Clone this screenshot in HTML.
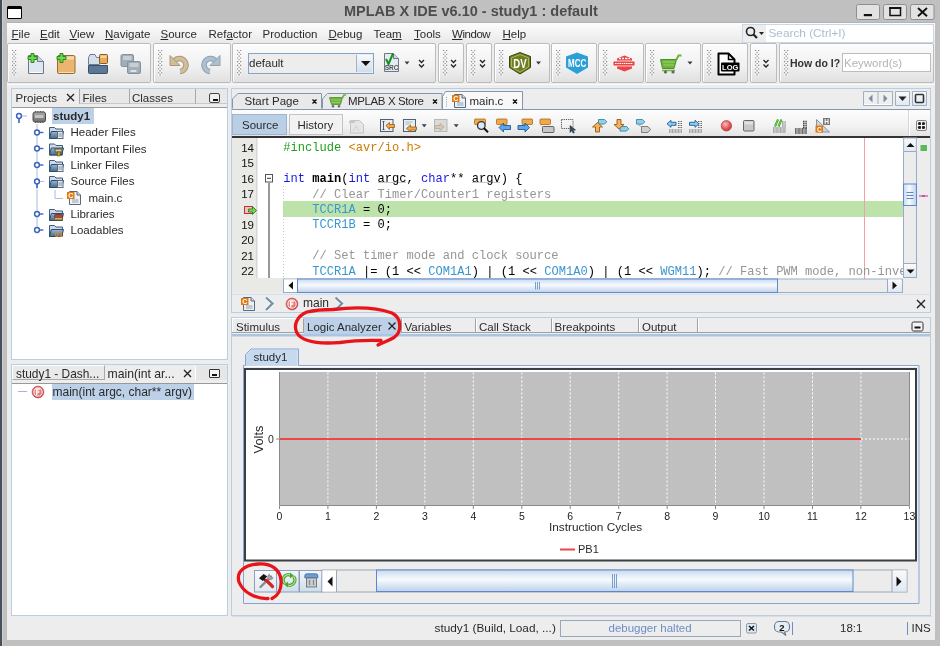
<!DOCTYPE html>
<html><head><meta charset="utf-8">
<style>
*{box-sizing:border-box;margin:0;padding:0}
html,body{width:940px;height:646px;overflow:hidden;background:#c0c0c0}
body{will-change:transform}
body{position:relative;font-family:"Liberation Sans",sans-serif;font-size:11.5px;color:#222}
.a{position:absolute}
.t{position:absolute;white-space:nowrap;line-height:14px;color:#2a2a2a}
.tb{position:absolute;top:43px;height:40px;border:1px solid #bcbcbc;box-shadow:inset 1px 1px 0 #fff;background:linear-gradient(#fcfcfc,#f0f0f0 60%,#e0e0e0);border-radius:2px}
.grip{position:absolute;top:6px;width:6px;height:27px;background-image:radial-gradient(circle at 1px 1px,#8e8e8e 0.8px,transparent 1px);background-size:2.5px 2.5px}
.u{text-decoration:underline;text-underline-offset:0.5px;text-decoration-thickness:1px}
.code{position:absolute;left:283.2px;white-space:pre;font-family:"Liberation Mono",monospace;font-size:12.08px;line-height:15px;color:#000}
.ln{position:absolute;left:232px;width:22px;text-align:right;font-size:11.5px;line-height:15px;color:#111}
.kw{color:#1818ea}.pp{color:#22a022}.st{color:#ce7b00}.cm{color:#959595}.mc{color:#3a96d0}.b{font-weight:bold}
.gx{position:absolute;top:372px;width:1px;height:133px;background-image:linear-gradient(#fff 50%,transparent 50%);background-size:1px 4px}
.tk{position:absolute;top:510px;width:20px;text-align:center;font-size:10.5px;color:#222}
</style></head><body>
<svg width="0" height="0" style="position:absolute">
<defs>
<linearGradient id="gBtn" x1="0" y1="0" x2="0" y2="1"><stop offset="0" stop-color="#fafafa"/><stop offset="1" stop-color="#dfe8f2"/></linearGradient>
<linearGradient id="gBtn2" x1="0" y1="0" x2="0" y2="1"><stop offset="0" stop-color="#f4f7fb"/><stop offset="1" stop-color="#cfdcea"/></linearGradient>
<radialGradient id="gRed2" cx="0.45" cy="0.4" r="0.7"><stop offset="0" stop-color="#f6a0a0"/><stop offset="0.7" stop-color="#e06060"/><stop offset="1" stop-color="#c03a3a"/></radialGradient>
<linearGradient id="gFold" x1="0" y1="0" x2="0" y2="1"><stop offset="0" stop-color="#9ab8d6"/><stop offset="1" stop-color="#46698e"/></linearGradient>
<linearGradient id="gChip" x1="0" y1="0" x2="0" y2="1"><stop offset="0" stop-color="#a8a8a8"/><stop offset="1" stop-color="#6e6e6e"/></linearGradient>
<radialGradient id="gRed" cx="0.4" cy="0.35" r="0.7"><stop offset="0" stop-color="#fbb"/><stop offset="0.6" stop-color="#e25a5a"/><stop offset="1" stop-color="#b83232"/></radialGradient>
<linearGradient id="gThumb" x1="0" y1="0" x2="0" y2="1"><stop offset="0" stop-color="#c8daef"/><stop offset="0.45" stop-color="#f7fafd"/><stop offset="1" stop-color="#bcd2ea"/></linearGradient>
<linearGradient id="gThumbV" x1="0" y1="0" x2="1" y2="0"><stop offset="0" stop-color="#c8daef"/><stop offset="0.45" stop-color="#f7fafd"/><stop offset="1" stop-color="#bcd2ea"/></linearGradient>
<pattern id="pGrip" width="4" height="4" patternUnits="userSpaceOnUse"><rect x="0" y="0" width="1" height="1" fill="#8a8a8a"/><rect x="2" y="2" width="1" height="1" fill="#8a8a8a"/><rect x="1" y="1" width="1" height="1" fill="#fff"/><rect x="3" y="3" width="1" height="1" fill="#fff"/></pattern>
<g id="folder"><path d="M0.5 2.5h5l1.5 1.5h6.5v9.5h-13z" fill="#cddbe8" stroke="#3e5b7c"/><path d="M0.5 13.5L2.3 6.5h12.2l-1.8 7z" fill="url(#gFold)" stroke="#2f4c6c"/></g>
<g id="hnd"><circle cx="3" cy="3" r="2.4" fill="#fff" stroke="#3c63bf" stroke-width="1.5"/><path d="M5.4 3h4" stroke="#3c63bf" stroke-width="1.4"/></g>
<g id="cfile"><path d="M2.5 1.5h7.5l3.5 3.5v9.5h-11z" fill="#eef2f6" stroke="#56687a"/><path d="M10 1.5v3.5h3.5" fill="#d6dee6" stroke="#56687a"/><path d="M5 10h6.5M5 12h6.5" stroke="#8aa0b8"/><rect x="0" y="2" width="7.5" height="7" fill="#e07b10"/><text x="3.75" y="8" font-family="Liberation Sans" font-weight="bold" font-size="7" fill="#fff" text-anchor="middle">C</text></g>
<g id="fbadge"><circle cx="6" cy="6" r="5.9" fill="url(#gRed2)" stroke="#b04545" stroke-width="0.7"/><circle cx="6" cy="6" r="4.1" fill="none" stroke="#fff" stroke-width="0.9"/><path d="M4.7 9.2V3.2h3.2M4.7 6h2.6" stroke="#fff" stroke-width="1.3" fill="none"/></g>
<g id="chev"><path d="M1.5 1L8 7l-6.5 6.5" fill="none" stroke="#f4f7fa" stroke-width="4"/><path d="M1.5 1L8 7l-6.5 6.5" fill="none" stroke="#7890a8" stroke-width="2.3"/></g>
<g id="mini"><rect x="0.5" y="0.5" width="11" height="9" rx="1.5" fill="#f4f4f4" stroke="#333"/><rect x="3" y="5" width="6" height="2" fill="#111"/></g>
</defs></svg>
<!-- window frame -->
<div class="a" style="left:0;top:0;width:2px;height:646px;background:#45505c"></div>
<div class="a" style="left:2px;top:0;width:1px;height:646px;background:#d0d0d0"></div>
<!-- title -->
<div class="a" style="left:7px;top:5.5px;width:15px;height:13px;border:1.6px solid #000;border-top-width:3.5px;background:#fff;border-radius:1.5px"></div>
<div class="t" style="left:344px;top:3px;font-weight:bold;font-size:14.5px;line-height:17px;color:#4d4d4d">MPLAB X IDE v6.10 - study1 : default</div>
<svg class="a" style="left:850px;top:0" width="90" height="24">
<rect x="6.5" y="4.5" width="23" height="15" rx="2" fill="#e2e2e2" stroke="#8e8e8e"/><rect x="13.8" y="14" width="8.2" height="2.2" fill="#111"/>
<rect x="33.5" y="4.5" width="23" height="15" rx="2" fill="#e2e2e2" stroke="#8e8e8e"/><rect x="40" y="8" width="10.5" height="7.5" fill="none" stroke="#111" stroke-width="1.5"/><rect x="39.2" y="7" width="12" height="2" fill="#111"/>
<rect x="60.5" y="4.5" width="23.5" height="15" rx="2" fill="#e2e2e2" stroke="#8e8e8e"/><path d="M68 8l9 8.2M77 8l-9 8.2" stroke="#111" stroke-width="1.9"/>
</svg>
<!-- main window content bg -->
<div class="a" style="left:7px;top:23px;width:928px;height:617px;background:#ededed"></div>
<!-- menu bar -->
<div class="a" style="left:7px;top:22px;width:928px;height:1px;background:#b2b2b2"></div><div class="a" style="left:7px;top:23px;width:928px;height:20px;background:linear-gradient(#fdfdfd,#e9e9e9)"></div>
<div class="t" style="top:26.5px;left:11.5px"><span class="u">F</span>ile</div>
<div class="t" style="top:26.5px;left:40px"><span class="u">E</span>dit</div>
<div class="t" style="top:26.5px;left:69.5px"><span class="u">V</span>iew</div>
<div class="t" style="top:26.5px;left:105px"><span class="u">N</span>avigate</div>
<div class="t" style="top:26.5px;left:160.5px"><span class="u">S</span>ource</div>
<div class="t" style="top:26.5px;left:208.5px">Ref<span class="u">a</span>ctor</div>
<div class="t" style="top:26.5px;left:262.5px">Production</div>
<div class="t" style="top:26.5px;left:328.5px"><span class="u">D</span>ebug</div>
<div class="t" style="top:26.5px;left:373.5px">Tea<span class="u">m</span></div>
<div class="t" style="top:26.5px;left:414px"><span class="u">T</span>ools</div>
<div class="t" style="top:26.5px;left:452px;letter-spacing:-0.45px"><span class="u">W</span>indow</div>
<div class="t" style="top:26.5px;left:502.5px"><span class="u">H</span>elp</div>
<!-- search -->
<div class="a" style="left:742px;top:24px;width:192px;height:19px;border:1px solid #c9d8e8;background:#fff"></div>
<div class="a" style="left:743px;top:25px;width:23px;height:17px;background:#ededed"></div>
<svg class="a" style="left:745px;top:26px" width="20" height="14"><circle cx="5.5" cy="5.5" r="4" fill="none" stroke="#222" stroke-width="1.6"/><path d="M8.5 8.5L12 12" stroke="#222" stroke-width="2.2"/><path d="M14 6h5l-2.5 3z" fill="#222"/></svg>
<div class="t" style="left:768.5px;top:26px;color:#a9bdd6;font-size:11.8px">Search (Ctrl+I)</div>

<!-- TOOLBAR -->
<div class="tb" style="left:7px;width:144px"></div>
<div class="tb" style="left:153px;width:78px"></div>
<div class="tb" style="left:232px;width:204px"></div>
<div class="tb" style="left:438px;width:26px"></div>
<div class="tb" style="left:466px;width:26px"></div>
<div class="tb" style="left:494px;width:56px"></div>
<div class="tb" style="left:551px;width:46px"></div>
<div class="tb" style="left:598px;width:46px"></div>
<div class="tb" style="left:645px;width:56px"></div>
<div class="tb" style="left:702px;width:46px"></div>
<div class="tb" style="left:750px;width:27px"></div>
<div class="tb" style="left:779px;width:155px"></div>
<svg class="a" style="left:0;top:0" width="940" height="90">
<path d="M13.5 50.00h1.2v1.1h-1.2z M12.0 51.85h1.2v1.1h-1.2z M15.0 51.85h1.2v1.1h-1.2z M13.5 53.70h1.2v1.1h-1.2z M12.0 55.55h1.2v1.1h-1.2z M15.0 55.55h1.2v1.1h-1.2z M13.5 57.40h1.2v1.1h-1.2z M12.0 59.25h1.2v1.1h-1.2z M15.0 59.25h1.2v1.1h-1.2z M13.5 61.10h1.2v1.1h-1.2z M12.0 62.95h1.2v1.1h-1.2z M15.0 62.95h1.2v1.1h-1.2z M13.5 64.80h1.2v1.1h-1.2z M12.0 66.65h1.2v1.1h-1.2z M15.0 66.65h1.2v1.1h-1.2z M13.5 68.50h1.2v1.1h-1.2z M12.0 70.35h1.2v1.1h-1.2z M15.0 70.35h1.2v1.1h-1.2z M13.5 72.20h1.2v1.1h-1.2z M12.0 74.05h1.2v1.1h-1.2z M15.0 74.05h1.2v1.1h-1.2z" fill="#fff"/><path d="M12.0 50.00h1.2v1.1h-1.2z M15.0 50.00h1.2v1.1h-1.2z M13.5 51.85h1.2v1.1h-1.2z M12.0 53.70h1.2v1.1h-1.2z M15.0 53.70h1.2v1.1h-1.2z M13.5 55.55h1.2v1.1h-1.2z M12.0 57.40h1.2v1.1h-1.2z M15.0 57.40h1.2v1.1h-1.2z M13.5 59.25h1.2v1.1h-1.2z M12.0 61.10h1.2v1.1h-1.2z M15.0 61.10h1.2v1.1h-1.2z M13.5 62.95h1.2v1.1h-1.2z M12.0 64.80h1.2v1.1h-1.2z M15.0 64.80h1.2v1.1h-1.2z M13.5 66.65h1.2v1.1h-1.2z M12.0 68.50h1.2v1.1h-1.2z M15.0 68.50h1.2v1.1h-1.2z M13.5 70.35h1.2v1.1h-1.2z M12.0 72.20h1.2v1.1h-1.2z M15.0 72.20h1.2v1.1h-1.2z M13.5 74.05h1.2v1.1h-1.2z" fill="#8c8c8c"/>
<path d="M159.5 50.00h1.2v1.1h-1.2z M158.0 51.85h1.2v1.1h-1.2z M161.0 51.85h1.2v1.1h-1.2z M159.5 53.70h1.2v1.1h-1.2z M158.0 55.55h1.2v1.1h-1.2z M161.0 55.55h1.2v1.1h-1.2z M159.5 57.40h1.2v1.1h-1.2z M158.0 59.25h1.2v1.1h-1.2z M161.0 59.25h1.2v1.1h-1.2z M159.5 61.10h1.2v1.1h-1.2z M158.0 62.95h1.2v1.1h-1.2z M161.0 62.95h1.2v1.1h-1.2z M159.5 64.80h1.2v1.1h-1.2z M158.0 66.65h1.2v1.1h-1.2z M161.0 66.65h1.2v1.1h-1.2z M159.5 68.50h1.2v1.1h-1.2z M158.0 70.35h1.2v1.1h-1.2z M161.0 70.35h1.2v1.1h-1.2z M159.5 72.20h1.2v1.1h-1.2z M158.0 74.05h1.2v1.1h-1.2z M161.0 74.05h1.2v1.1h-1.2z" fill="#fff"/><path d="M158.0 50.00h1.2v1.1h-1.2z M161.0 50.00h1.2v1.1h-1.2z M159.5 51.85h1.2v1.1h-1.2z M158.0 53.70h1.2v1.1h-1.2z M161.0 53.70h1.2v1.1h-1.2z M159.5 55.55h1.2v1.1h-1.2z M158.0 57.40h1.2v1.1h-1.2z M161.0 57.40h1.2v1.1h-1.2z M159.5 59.25h1.2v1.1h-1.2z M158.0 61.10h1.2v1.1h-1.2z M161.0 61.10h1.2v1.1h-1.2z M159.5 62.95h1.2v1.1h-1.2z M158.0 64.80h1.2v1.1h-1.2z M161.0 64.80h1.2v1.1h-1.2z M159.5 66.65h1.2v1.1h-1.2z M158.0 68.50h1.2v1.1h-1.2z M161.0 68.50h1.2v1.1h-1.2z M159.5 70.35h1.2v1.1h-1.2z M158.0 72.20h1.2v1.1h-1.2z M161.0 72.20h1.2v1.1h-1.2z M159.5 74.05h1.2v1.1h-1.2z" fill="#8c8c8c"/>
<path d="M238.5 50.00h1.2v1.1h-1.2z M237.0 51.85h1.2v1.1h-1.2z M240.0 51.85h1.2v1.1h-1.2z M238.5 53.70h1.2v1.1h-1.2z M237.0 55.55h1.2v1.1h-1.2z M240.0 55.55h1.2v1.1h-1.2z M238.5 57.40h1.2v1.1h-1.2z M237.0 59.25h1.2v1.1h-1.2z M240.0 59.25h1.2v1.1h-1.2z M238.5 61.10h1.2v1.1h-1.2z M237.0 62.95h1.2v1.1h-1.2z M240.0 62.95h1.2v1.1h-1.2z M238.5 64.80h1.2v1.1h-1.2z M237.0 66.65h1.2v1.1h-1.2z M240.0 66.65h1.2v1.1h-1.2z M238.5 68.50h1.2v1.1h-1.2z M237.0 70.35h1.2v1.1h-1.2z M240.0 70.35h1.2v1.1h-1.2z M238.5 72.20h1.2v1.1h-1.2z M237.0 74.05h1.2v1.1h-1.2z M240.0 74.05h1.2v1.1h-1.2z" fill="#fff"/><path d="M237.0 50.00h1.2v1.1h-1.2z M240.0 50.00h1.2v1.1h-1.2z M238.5 51.85h1.2v1.1h-1.2z M237.0 53.70h1.2v1.1h-1.2z M240.0 53.70h1.2v1.1h-1.2z M238.5 55.55h1.2v1.1h-1.2z M237.0 57.40h1.2v1.1h-1.2z M240.0 57.40h1.2v1.1h-1.2z M238.5 59.25h1.2v1.1h-1.2z M237.0 61.10h1.2v1.1h-1.2z M240.0 61.10h1.2v1.1h-1.2z M238.5 62.95h1.2v1.1h-1.2z M237.0 64.80h1.2v1.1h-1.2z M240.0 64.80h1.2v1.1h-1.2z M238.5 66.65h1.2v1.1h-1.2z M237.0 68.50h1.2v1.1h-1.2z M240.0 68.50h1.2v1.1h-1.2z M238.5 70.35h1.2v1.1h-1.2z M237.0 72.20h1.2v1.1h-1.2z M240.0 72.20h1.2v1.1h-1.2z M238.5 74.05h1.2v1.1h-1.2z" fill="#8c8c8c"/>
<path d="M444.5 50.00h1.2v1.1h-1.2z M443.0 51.85h1.2v1.1h-1.2z M446.0 51.85h1.2v1.1h-1.2z M444.5 53.70h1.2v1.1h-1.2z M443.0 55.55h1.2v1.1h-1.2z M446.0 55.55h1.2v1.1h-1.2z M444.5 57.40h1.2v1.1h-1.2z M443.0 59.25h1.2v1.1h-1.2z M446.0 59.25h1.2v1.1h-1.2z M444.5 61.10h1.2v1.1h-1.2z M443.0 62.95h1.2v1.1h-1.2z M446.0 62.95h1.2v1.1h-1.2z M444.5 64.80h1.2v1.1h-1.2z M443.0 66.65h1.2v1.1h-1.2z M446.0 66.65h1.2v1.1h-1.2z M444.5 68.50h1.2v1.1h-1.2z M443.0 70.35h1.2v1.1h-1.2z M446.0 70.35h1.2v1.1h-1.2z M444.5 72.20h1.2v1.1h-1.2z M443.0 74.05h1.2v1.1h-1.2z M446.0 74.05h1.2v1.1h-1.2z" fill="#fff"/><path d="M443.0 50.00h1.2v1.1h-1.2z M446.0 50.00h1.2v1.1h-1.2z M444.5 51.85h1.2v1.1h-1.2z M443.0 53.70h1.2v1.1h-1.2z M446.0 53.70h1.2v1.1h-1.2z M444.5 55.55h1.2v1.1h-1.2z M443.0 57.40h1.2v1.1h-1.2z M446.0 57.40h1.2v1.1h-1.2z M444.5 59.25h1.2v1.1h-1.2z M443.0 61.10h1.2v1.1h-1.2z M446.0 61.10h1.2v1.1h-1.2z M444.5 62.95h1.2v1.1h-1.2z M443.0 64.80h1.2v1.1h-1.2z M446.0 64.80h1.2v1.1h-1.2z M444.5 66.65h1.2v1.1h-1.2z M443.0 68.50h1.2v1.1h-1.2z M446.0 68.50h1.2v1.1h-1.2z M444.5 70.35h1.2v1.1h-1.2z M443.0 72.20h1.2v1.1h-1.2z M446.0 72.20h1.2v1.1h-1.2z M444.5 74.05h1.2v1.1h-1.2z" fill="#8c8c8c"/>
<path d="M472.5 50.00h1.2v1.1h-1.2z M471.0 51.85h1.2v1.1h-1.2z M474.0 51.85h1.2v1.1h-1.2z M472.5 53.70h1.2v1.1h-1.2z M471.0 55.55h1.2v1.1h-1.2z M474.0 55.55h1.2v1.1h-1.2z M472.5 57.40h1.2v1.1h-1.2z M471.0 59.25h1.2v1.1h-1.2z M474.0 59.25h1.2v1.1h-1.2z M472.5 61.10h1.2v1.1h-1.2z M471.0 62.95h1.2v1.1h-1.2z M474.0 62.95h1.2v1.1h-1.2z M472.5 64.80h1.2v1.1h-1.2z M471.0 66.65h1.2v1.1h-1.2z M474.0 66.65h1.2v1.1h-1.2z M472.5 68.50h1.2v1.1h-1.2z M471.0 70.35h1.2v1.1h-1.2z M474.0 70.35h1.2v1.1h-1.2z M472.5 72.20h1.2v1.1h-1.2z M471.0 74.05h1.2v1.1h-1.2z M474.0 74.05h1.2v1.1h-1.2z" fill="#fff"/><path d="M471.0 50.00h1.2v1.1h-1.2z M474.0 50.00h1.2v1.1h-1.2z M472.5 51.85h1.2v1.1h-1.2z M471.0 53.70h1.2v1.1h-1.2z M474.0 53.70h1.2v1.1h-1.2z M472.5 55.55h1.2v1.1h-1.2z M471.0 57.40h1.2v1.1h-1.2z M474.0 57.40h1.2v1.1h-1.2z M472.5 59.25h1.2v1.1h-1.2z M471.0 61.10h1.2v1.1h-1.2z M474.0 61.10h1.2v1.1h-1.2z M472.5 62.95h1.2v1.1h-1.2z M471.0 64.80h1.2v1.1h-1.2z M474.0 64.80h1.2v1.1h-1.2z M472.5 66.65h1.2v1.1h-1.2z M471.0 68.50h1.2v1.1h-1.2z M474.0 68.50h1.2v1.1h-1.2z M472.5 70.35h1.2v1.1h-1.2z M471.0 72.20h1.2v1.1h-1.2z M474.0 72.20h1.2v1.1h-1.2z M472.5 74.05h1.2v1.1h-1.2z" fill="#8c8c8c"/>
<path d="M500.5 50.00h1.2v1.1h-1.2z M499.0 51.85h1.2v1.1h-1.2z M502.0 51.85h1.2v1.1h-1.2z M500.5 53.70h1.2v1.1h-1.2z M499.0 55.55h1.2v1.1h-1.2z M502.0 55.55h1.2v1.1h-1.2z M500.5 57.40h1.2v1.1h-1.2z M499.0 59.25h1.2v1.1h-1.2z M502.0 59.25h1.2v1.1h-1.2z M500.5 61.10h1.2v1.1h-1.2z M499.0 62.95h1.2v1.1h-1.2z M502.0 62.95h1.2v1.1h-1.2z M500.5 64.80h1.2v1.1h-1.2z M499.0 66.65h1.2v1.1h-1.2z M502.0 66.65h1.2v1.1h-1.2z M500.5 68.50h1.2v1.1h-1.2z M499.0 70.35h1.2v1.1h-1.2z M502.0 70.35h1.2v1.1h-1.2z M500.5 72.20h1.2v1.1h-1.2z M499.0 74.05h1.2v1.1h-1.2z M502.0 74.05h1.2v1.1h-1.2z" fill="#fff"/><path d="M499.0 50.00h1.2v1.1h-1.2z M502.0 50.00h1.2v1.1h-1.2z M500.5 51.85h1.2v1.1h-1.2z M499.0 53.70h1.2v1.1h-1.2z M502.0 53.70h1.2v1.1h-1.2z M500.5 55.55h1.2v1.1h-1.2z M499.0 57.40h1.2v1.1h-1.2z M502.0 57.40h1.2v1.1h-1.2z M500.5 59.25h1.2v1.1h-1.2z M499.0 61.10h1.2v1.1h-1.2z M502.0 61.10h1.2v1.1h-1.2z M500.5 62.95h1.2v1.1h-1.2z M499.0 64.80h1.2v1.1h-1.2z M502.0 64.80h1.2v1.1h-1.2z M500.5 66.65h1.2v1.1h-1.2z M499.0 68.50h1.2v1.1h-1.2z M502.0 68.50h1.2v1.1h-1.2z M500.5 70.35h1.2v1.1h-1.2z M499.0 72.20h1.2v1.1h-1.2z M502.0 72.20h1.2v1.1h-1.2z M500.5 74.05h1.2v1.1h-1.2z" fill="#8c8c8c"/>
<path d="M557.5 50.00h1.2v1.1h-1.2z M556.0 51.85h1.2v1.1h-1.2z M559.0 51.85h1.2v1.1h-1.2z M557.5 53.70h1.2v1.1h-1.2z M556.0 55.55h1.2v1.1h-1.2z M559.0 55.55h1.2v1.1h-1.2z M557.5 57.40h1.2v1.1h-1.2z M556.0 59.25h1.2v1.1h-1.2z M559.0 59.25h1.2v1.1h-1.2z M557.5 61.10h1.2v1.1h-1.2z M556.0 62.95h1.2v1.1h-1.2z M559.0 62.95h1.2v1.1h-1.2z M557.5 64.80h1.2v1.1h-1.2z M556.0 66.65h1.2v1.1h-1.2z M559.0 66.65h1.2v1.1h-1.2z M557.5 68.50h1.2v1.1h-1.2z M556.0 70.35h1.2v1.1h-1.2z M559.0 70.35h1.2v1.1h-1.2z M557.5 72.20h1.2v1.1h-1.2z M556.0 74.05h1.2v1.1h-1.2z M559.0 74.05h1.2v1.1h-1.2z" fill="#fff"/><path d="M556.0 50.00h1.2v1.1h-1.2z M559.0 50.00h1.2v1.1h-1.2z M557.5 51.85h1.2v1.1h-1.2z M556.0 53.70h1.2v1.1h-1.2z M559.0 53.70h1.2v1.1h-1.2z M557.5 55.55h1.2v1.1h-1.2z M556.0 57.40h1.2v1.1h-1.2z M559.0 57.40h1.2v1.1h-1.2z M557.5 59.25h1.2v1.1h-1.2z M556.0 61.10h1.2v1.1h-1.2z M559.0 61.10h1.2v1.1h-1.2z M557.5 62.95h1.2v1.1h-1.2z M556.0 64.80h1.2v1.1h-1.2z M559.0 64.80h1.2v1.1h-1.2z M557.5 66.65h1.2v1.1h-1.2z M556.0 68.50h1.2v1.1h-1.2z M559.0 68.50h1.2v1.1h-1.2z M557.5 70.35h1.2v1.1h-1.2z M556.0 72.20h1.2v1.1h-1.2z M559.0 72.20h1.2v1.1h-1.2z M557.5 74.05h1.2v1.1h-1.2z" fill="#8c8c8c"/>
<path d="M604.5 50.00h1.2v1.1h-1.2z M603.0 51.85h1.2v1.1h-1.2z M606.0 51.85h1.2v1.1h-1.2z M604.5 53.70h1.2v1.1h-1.2z M603.0 55.55h1.2v1.1h-1.2z M606.0 55.55h1.2v1.1h-1.2z M604.5 57.40h1.2v1.1h-1.2z M603.0 59.25h1.2v1.1h-1.2z M606.0 59.25h1.2v1.1h-1.2z M604.5 61.10h1.2v1.1h-1.2z M603.0 62.95h1.2v1.1h-1.2z M606.0 62.95h1.2v1.1h-1.2z M604.5 64.80h1.2v1.1h-1.2z M603.0 66.65h1.2v1.1h-1.2z M606.0 66.65h1.2v1.1h-1.2z M604.5 68.50h1.2v1.1h-1.2z M603.0 70.35h1.2v1.1h-1.2z M606.0 70.35h1.2v1.1h-1.2z M604.5 72.20h1.2v1.1h-1.2z M603.0 74.05h1.2v1.1h-1.2z M606.0 74.05h1.2v1.1h-1.2z" fill="#fff"/><path d="M603.0 50.00h1.2v1.1h-1.2z M606.0 50.00h1.2v1.1h-1.2z M604.5 51.85h1.2v1.1h-1.2z M603.0 53.70h1.2v1.1h-1.2z M606.0 53.70h1.2v1.1h-1.2z M604.5 55.55h1.2v1.1h-1.2z M603.0 57.40h1.2v1.1h-1.2z M606.0 57.40h1.2v1.1h-1.2z M604.5 59.25h1.2v1.1h-1.2z M603.0 61.10h1.2v1.1h-1.2z M606.0 61.10h1.2v1.1h-1.2z M604.5 62.95h1.2v1.1h-1.2z M603.0 64.80h1.2v1.1h-1.2z M606.0 64.80h1.2v1.1h-1.2z M604.5 66.65h1.2v1.1h-1.2z M603.0 68.50h1.2v1.1h-1.2z M606.0 68.50h1.2v1.1h-1.2z M604.5 70.35h1.2v1.1h-1.2z M603.0 72.20h1.2v1.1h-1.2z M606.0 72.20h1.2v1.1h-1.2z M604.5 74.05h1.2v1.1h-1.2z" fill="#8c8c8c"/>
<path d="M651.5 50.00h1.2v1.1h-1.2z M650.0 51.85h1.2v1.1h-1.2z M653.0 51.85h1.2v1.1h-1.2z M651.5 53.70h1.2v1.1h-1.2z M650.0 55.55h1.2v1.1h-1.2z M653.0 55.55h1.2v1.1h-1.2z M651.5 57.40h1.2v1.1h-1.2z M650.0 59.25h1.2v1.1h-1.2z M653.0 59.25h1.2v1.1h-1.2z M651.5 61.10h1.2v1.1h-1.2z M650.0 62.95h1.2v1.1h-1.2z M653.0 62.95h1.2v1.1h-1.2z M651.5 64.80h1.2v1.1h-1.2z M650.0 66.65h1.2v1.1h-1.2z M653.0 66.65h1.2v1.1h-1.2z M651.5 68.50h1.2v1.1h-1.2z M650.0 70.35h1.2v1.1h-1.2z M653.0 70.35h1.2v1.1h-1.2z M651.5 72.20h1.2v1.1h-1.2z M650.0 74.05h1.2v1.1h-1.2z M653.0 74.05h1.2v1.1h-1.2z" fill="#fff"/><path d="M650.0 50.00h1.2v1.1h-1.2z M653.0 50.00h1.2v1.1h-1.2z M651.5 51.85h1.2v1.1h-1.2z M650.0 53.70h1.2v1.1h-1.2z M653.0 53.70h1.2v1.1h-1.2z M651.5 55.55h1.2v1.1h-1.2z M650.0 57.40h1.2v1.1h-1.2z M653.0 57.40h1.2v1.1h-1.2z M651.5 59.25h1.2v1.1h-1.2z M650.0 61.10h1.2v1.1h-1.2z M653.0 61.10h1.2v1.1h-1.2z M651.5 62.95h1.2v1.1h-1.2z M650.0 64.80h1.2v1.1h-1.2z M653.0 64.80h1.2v1.1h-1.2z M651.5 66.65h1.2v1.1h-1.2z M650.0 68.50h1.2v1.1h-1.2z M653.0 68.50h1.2v1.1h-1.2z M651.5 70.35h1.2v1.1h-1.2z M650.0 72.20h1.2v1.1h-1.2z M653.0 72.20h1.2v1.1h-1.2z M651.5 74.05h1.2v1.1h-1.2z" fill="#8c8c8c"/>
<path d="M708.5 50.00h1.2v1.1h-1.2z M707.0 51.85h1.2v1.1h-1.2z M710.0 51.85h1.2v1.1h-1.2z M708.5 53.70h1.2v1.1h-1.2z M707.0 55.55h1.2v1.1h-1.2z M710.0 55.55h1.2v1.1h-1.2z M708.5 57.40h1.2v1.1h-1.2z M707.0 59.25h1.2v1.1h-1.2z M710.0 59.25h1.2v1.1h-1.2z M708.5 61.10h1.2v1.1h-1.2z M707.0 62.95h1.2v1.1h-1.2z M710.0 62.95h1.2v1.1h-1.2z M708.5 64.80h1.2v1.1h-1.2z M707.0 66.65h1.2v1.1h-1.2z M710.0 66.65h1.2v1.1h-1.2z M708.5 68.50h1.2v1.1h-1.2z M707.0 70.35h1.2v1.1h-1.2z M710.0 70.35h1.2v1.1h-1.2z M708.5 72.20h1.2v1.1h-1.2z M707.0 74.05h1.2v1.1h-1.2z M710.0 74.05h1.2v1.1h-1.2z" fill="#fff"/><path d="M707.0 50.00h1.2v1.1h-1.2z M710.0 50.00h1.2v1.1h-1.2z M708.5 51.85h1.2v1.1h-1.2z M707.0 53.70h1.2v1.1h-1.2z M710.0 53.70h1.2v1.1h-1.2z M708.5 55.55h1.2v1.1h-1.2z M707.0 57.40h1.2v1.1h-1.2z M710.0 57.40h1.2v1.1h-1.2z M708.5 59.25h1.2v1.1h-1.2z M707.0 61.10h1.2v1.1h-1.2z M710.0 61.10h1.2v1.1h-1.2z M708.5 62.95h1.2v1.1h-1.2z M707.0 64.80h1.2v1.1h-1.2z M710.0 64.80h1.2v1.1h-1.2z M708.5 66.65h1.2v1.1h-1.2z M707.0 68.50h1.2v1.1h-1.2z M710.0 68.50h1.2v1.1h-1.2z M708.5 70.35h1.2v1.1h-1.2z M707.0 72.20h1.2v1.1h-1.2z M710.0 72.20h1.2v1.1h-1.2z M708.5 74.05h1.2v1.1h-1.2z" fill="#8c8c8c"/>
<path d="M756.5 50.00h1.2v1.1h-1.2z M755.0 51.85h1.2v1.1h-1.2z M758.0 51.85h1.2v1.1h-1.2z M756.5 53.70h1.2v1.1h-1.2z M755.0 55.55h1.2v1.1h-1.2z M758.0 55.55h1.2v1.1h-1.2z M756.5 57.40h1.2v1.1h-1.2z M755.0 59.25h1.2v1.1h-1.2z M758.0 59.25h1.2v1.1h-1.2z M756.5 61.10h1.2v1.1h-1.2z M755.0 62.95h1.2v1.1h-1.2z M758.0 62.95h1.2v1.1h-1.2z M756.5 64.80h1.2v1.1h-1.2z M755.0 66.65h1.2v1.1h-1.2z M758.0 66.65h1.2v1.1h-1.2z M756.5 68.50h1.2v1.1h-1.2z M755.0 70.35h1.2v1.1h-1.2z M758.0 70.35h1.2v1.1h-1.2z M756.5 72.20h1.2v1.1h-1.2z M755.0 74.05h1.2v1.1h-1.2z M758.0 74.05h1.2v1.1h-1.2z" fill="#fff"/><path d="M755.0 50.00h1.2v1.1h-1.2z M758.0 50.00h1.2v1.1h-1.2z M756.5 51.85h1.2v1.1h-1.2z M755.0 53.70h1.2v1.1h-1.2z M758.0 53.70h1.2v1.1h-1.2z M756.5 55.55h1.2v1.1h-1.2z M755.0 57.40h1.2v1.1h-1.2z M758.0 57.40h1.2v1.1h-1.2z M756.5 59.25h1.2v1.1h-1.2z M755.0 61.10h1.2v1.1h-1.2z M758.0 61.10h1.2v1.1h-1.2z M756.5 62.95h1.2v1.1h-1.2z M755.0 64.80h1.2v1.1h-1.2z M758.0 64.80h1.2v1.1h-1.2z M756.5 66.65h1.2v1.1h-1.2z M755.0 68.50h1.2v1.1h-1.2z M758.0 68.50h1.2v1.1h-1.2z M756.5 70.35h1.2v1.1h-1.2z M755.0 72.20h1.2v1.1h-1.2z M758.0 72.20h1.2v1.1h-1.2z M756.5 74.05h1.2v1.1h-1.2z" fill="#8c8c8c"/>
<path d="M785.5 50.00h1.2v1.1h-1.2z M784.0 51.85h1.2v1.1h-1.2z M787.0 51.85h1.2v1.1h-1.2z M785.5 53.70h1.2v1.1h-1.2z M784.0 55.55h1.2v1.1h-1.2z M787.0 55.55h1.2v1.1h-1.2z M785.5 57.40h1.2v1.1h-1.2z M784.0 59.25h1.2v1.1h-1.2z M787.0 59.25h1.2v1.1h-1.2z M785.5 61.10h1.2v1.1h-1.2z M784.0 62.95h1.2v1.1h-1.2z M787.0 62.95h1.2v1.1h-1.2z M785.5 64.80h1.2v1.1h-1.2z M784.0 66.65h1.2v1.1h-1.2z M787.0 66.65h1.2v1.1h-1.2z M785.5 68.50h1.2v1.1h-1.2z M784.0 70.35h1.2v1.1h-1.2z M787.0 70.35h1.2v1.1h-1.2z M785.5 72.20h1.2v1.1h-1.2z M784.0 74.05h1.2v1.1h-1.2z M787.0 74.05h1.2v1.1h-1.2z" fill="#fff"/><path d="M784.0 50.00h1.2v1.1h-1.2z M787.0 50.00h1.2v1.1h-1.2z M785.5 51.85h1.2v1.1h-1.2z M784.0 53.70h1.2v1.1h-1.2z M787.0 53.70h1.2v1.1h-1.2z M785.5 55.55h1.2v1.1h-1.2z M784.0 57.40h1.2v1.1h-1.2z M787.0 57.40h1.2v1.1h-1.2z M785.5 59.25h1.2v1.1h-1.2z M784.0 61.10h1.2v1.1h-1.2z M787.0 61.10h1.2v1.1h-1.2z M785.5 62.95h1.2v1.1h-1.2z M784.0 64.80h1.2v1.1h-1.2z M787.0 64.80h1.2v1.1h-1.2z M785.5 66.65h1.2v1.1h-1.2z M784.0 68.50h1.2v1.1h-1.2z M787.0 68.50h1.2v1.1h-1.2z M785.5 70.35h1.2v1.1h-1.2z M784.0 72.20h1.2v1.1h-1.2z M787.0 72.20h1.2v1.1h-1.2z M785.5 74.05h1.2v1.1h-1.2z" fill="#8c8c8c"/>
<!-- new file -->
<path d="M28.5 55.5h9l6 6v12h-15z" fill="#dfe7f0" stroke="#6a7888"/><path d="M37.5 55.5v6h6" fill="#c9d5e2" stroke="#6a7888"/><path d="M29.5 72.5h13" stroke="#fff"/>
<path d="M28 56.5h3v-3h3v3h3v3h-3v3h-3v-3h-3z" fill="#6fd64a" stroke="#2a8a1e" stroke-width="1"/>
<!-- new project -->
<rect x="57.5" y="55.5" width="17.5" height="18" rx="1.5" fill="#e9b56f" stroke="#9a6a30"/><rect x="58.5" y="56.5" width="15.5" height="3" fill="#f6d9ac"/><path d="M58.5 72.5h15.5" stroke="#f6dcb4"/>
<path d="M57 56.5h3v-3h3v3h3v3h-3v3h-3v-3h-3z" fill="#6fd64a" stroke="#2a8a1e" stroke-width="1"/>
<!-- open project -->
<path d="M88.5 57.5l1.5-3h5l1.5 3h3v7h-11z" fill="#d3dfea" stroke="#6a7f94"/>
<rect x="99.5" y="54.5" width="8" height="9" rx="1" fill="#e8aa58" stroke="#8a5a20"/><rect x="100.5" y="55.5" width="6" height="2.5" fill="#f6d3a0"/>
<path d="M88.5 65.5h19v7a1 1 0 0 1-1 1h-17a1 1 0 0 1-1-1z" fill="#5b7895" stroke="#34506c"/>
<!-- save all disabled -->
<rect x="121" y="54.5" width="12.5" height="12" rx="1.5" fill="#a3adb7" stroke="#87919b"/><rect x="123" y="56" width="8.5" height="4" fill="#c6ced6"/>
<rect x="127.5" y="61.5" width="13" height="12" rx="1.5" fill="#a3adb7" stroke="#87919b"/><rect x="129.5" y="63" width="9" height="4" fill="#c6ced6"/><rect x="130.5" y="70" width="6" height="2" fill="#dde2e7"/>
<!-- undo -->
<path d="M174 61.5 A6.5 6.5 0 1 1 180 71.5" fill="none" stroke="#a8987a" stroke-width="5.5"/>
<path d="M174 61.5 A6.5 6.5 0 1 1 180 71.5" fill="none" stroke="#d2bf9a" stroke-width="3.5"/>
<path d="M170 55.5v10h10z" fill="#d2bf9a" stroke="#a8987a" stroke-linejoin="round"/>
<!-- redo -->
<path d="M216 61.5 A6.5 6.5 0 1 0 210 71.5" fill="none" stroke="#8ea2b4" stroke-width="5.5"/>
<path d="M216 61.5 A6.5 6.5 0 1 0 210 71.5" fill="none" stroke="#adc0d0" stroke-width="3.5"/>
<path d="M220 55.5v10h-10z" fill="#adc0d0" stroke="#8ea2b4" stroke-linejoin="round"/>
<!-- SRC -->
<path d="M384.5 53.5h9l5 5v13h-14z" fill="#e4ebf3" stroke="#6a7888"/><path d="M393.5 53.5v5h5" fill="#cdd8e4" stroke="#6a7888"/>
<path d="M386 59l2.5 5 4.5-10.5" fill="none" stroke="#149414" stroke-width="2"/>
<text x="391.5" y="69.5" font-family="Liberation Sans" font-size="6.5" font-weight="bold" fill="#555" text-anchor="middle">SRC</text>
<path d="M404.5 61.5h5l-2.5 3z" fill="#2d3e50"/>
<path d="M419 60l2.5 2.5 2.5-2.5M419 64.5l2.5 2.5 2.5-2.5" fill="none" stroke="#222" stroke-width="1.3"/>
<path d="M451 60l2.5 2.5 2.5-2.5M451 64.5l2.5 2.5 2.5-2.5" fill="none" stroke="#222" stroke-width="1.3"/>
<path d="M480 60l2.5 2.5 2.5-2.5M480 64.5l2.5 2.5 2.5-2.5" fill="none" stroke="#222" stroke-width="1.3"/>
<path d="M763.5 60l2.5 2.5 2.5-2.5M763.5 64.5l2.5 2.5 2.5-2.5" fill="none" stroke="#222" stroke-width="1.3"/>
<!-- DV -->
<path d="M509.5 56.5L520 52.5l10.5 4v11l-10.5 6.5-10.5-6.5z" fill="#6f7e22" stroke="#3a4410"/>
<path d="M511.5 57.8L520 54.6l8.5 3.2v9l-8.5 5.3-8.5-5.3z" fill="none" stroke="#b8c870" stroke-width="0.8"/>
<text x="513.3" y="67.7" font-family="Liberation Sans" font-size="13" font-weight="bold" fill="#fff" textLength="13.3" lengthAdjust="spacingAndGlyphs">DV</text>
<path d="M536 61.5h5l-2.5 3z" fill="#2d3e50"/>
<!-- MCC -->
<path d="M566 56.5L577 52.5l11 4v11l-11 6.5-11-6.5z" fill="#2c9fd6"/>
<text x="568" y="66.6" font-family="Liberation Sans" font-size="11" font-weight="bold" fill="#fff" textLength="18.2" lengthAdjust="spacingAndGlyphs">MCC</text>
<!-- discover -->
<path d="M617 58.5l7.5-3 7.5 3v10l-7.5 3-7.5-3z" fill="#e84545"/>
<rect x="613" y="61" width="22" height="5" rx="1" fill="#e84545" stroke="#fff" stroke-width="0.8"/>
<path d="M619 58.5h2M622 58.5h2M625 58.5h2.5M628.5 58.5h1.5" stroke="#fff" stroke-width="1.3"/>
<path d="M615 63.5h18" stroke="#fff" stroke-width="1.1" stroke-dasharray="1.6 0.6"/>
<!-- cart -->
<path d="M660.5 59.5h16l-2.5 9h-11.5z" fill="#6cb43c" stroke="#4e8e2a"/><path d="M676.5 59.5l2-4h3" fill="none" stroke="#6cb43c" stroke-width="2"/>
<path d="M663 62h12M663.5 65h10.5" stroke="#a6d880" stroke-width="0.8"/><path d="M662 70.5h13" stroke="#6cb43c" stroke-width="1.5"/>
<circle cx="665.5" cy="72" r="1.6" fill="#666"/><circle cx="673" cy="72" r="1.6" fill="#666"/>
<path d="M687.5 61.5h5l-2.5 3z" fill="#2d3e50"/>
<!-- LOG -->
<path d="M718.5 53.5h10l6 6v15h-16z" fill="#fff" stroke="#000" stroke-width="2" stroke-linejoin="round"/><path d="M728.5 53.5v6h6" fill="none" stroke="#000" stroke-width="1.5"/>
<rect x="721" y="62.5" width="18.5" height="9" rx="1" fill="#000"/>
<text x="730.2" y="70.3" font-family="Liberation Sans" font-size="7.5" font-weight="bold" fill="#fff" text-anchor="middle">LOG</text>
</svg>
<div class="t" style="left:790px;top:56px;font-size:10.5px;font-weight:bold;color:#333">How do I?</div>
<div class="a" style="left:842px;top:53px;width:89px;height:19px;border:1px solid #bdbdbd;background:#fff"></div>
<div class="t" style="left:844px;top:56px;color:#b4b4b4;font-size:11.5px">Keyword(s)</div>
<!-- combo default -->
<div class="a" style="left:247.5px;top:53px;width:126px;height:20.5px;border:1.5px solid #86a4c8;background:#ededed"></div>
<div class="t" style="left:249px;top:56px;font-size:11.5px">default</div>
<div class="a" style="left:356px;top:54.5px;width:16px;height:17.5px;background:linear-gradient(#f7fafd,#d2deeb);border-left:1px solid #9fb4cc"></div>
<svg class="a" style="left:360.5px;top:61.3px" width="10" height="6"><path d="M0 0H9.5L4.75 5Z" fill="#111"/></svg>

<div class="a" style="left:7px;top:84px;width:928px;height:1px;background:#fafafa"></div>
<!-- LEFT PANEL 1 -->
<div class="a" style="left:11px;top:88px;width:217px;height:272px;border:1px solid #b9cde3;background:#fff"></div>
<div class="a" style="left:12px;top:89px;width:215px;height:19px;background:#ededed;border-bottom:1px solid #999"></div>
<div class="a" style="left:79px;top:89px;width:50px;height:15px;border-left:1px solid #a8a8a8;border-bottom:1px solid #c8c8c8;background:#e8e8e8"></div>
<div class="a" style="left:129px;top:89px;width:66px;height:15px;border-left:1px solid #a8a8a8;border-bottom:1px solid #c8c8c8;background:#e8e8e8"></div>
<div class="a" style="left:195px;top:89px;width:32px;height:15px;border-left:1px solid #a8a8a8;border-bottom:1px solid #c8c8c8;background:#e8e8e8"></div>
<div class="t" style="left:15.5px;top:91px">Projects</div>
<svg class="a" style="left:66px;top:93px" width="9" height="9"><path d="M1 1L8 8M8 1L1 8" stroke="#222" stroke-width="1.3"/></svg>
<div class="t" style="left:82.5px;top:91px">Files</div>
<div class="t" style="left:132px;top:91px">Classes</div>
<div class="a" style="left:209px;top:93px;width:11px;height:10px;border:1.2px solid #444;border-radius:2px;background:#f0f0f0"><div class="a" style="left:2.5px;top:5px;width:5px;height:2px;background:#111"></div></div>

<div class="a" style="left:52px;top:108px;width:42px;height:16px;background:#bcd1e8"></div>
<div class="t b" style="left:53px;top:109px">study1</div>
<div class="t" style="left:70.5px;top:125px">Header Files</div>
<div class="t" style="left:70.5px;top:141.5px">Important Files</div>
<div class="t" style="left:70.5px;top:158px">Linker Files</div>
<div class="t" style="left:70.5px;top:174px">Source Files</div>
<div class="t" style="left:88.5px;top:190.5px">main.c</div>
<div class="t" style="left:70.5px;top:207px">Libraries</div>
<div class="t" style="left:70.5px;top:223px">Loadables</div>


<!-- tree icons -->
<svg class="a" style="left:12px;top:108px" width="75" height="130">
<path d="M25 16V122" stroke="#a9bde0" stroke-width="1"/>
<circle cx="7" cy="8" r="2.4" fill="#fff" stroke="#3c63bf" stroke-width="1.5"/><path d="M7 10.4v4.6" stroke="#3c63bf" stroke-width="1.6"/><path d="M10 8h5" stroke="#a9bde0"/>
<g transform="translate(22,21.5)"><use href="#hnd"/></g>
<g transform="translate(22,37.5)"><use href="#hnd"/></g>
<g transform="translate(22,54)"><use href="#hnd"/></g>
<circle cx="25" cy="73.5" r="2.4" fill="#fff" stroke="#3c63bf" stroke-width="1.5"/><path d="M25 76v4" stroke="#3c63bf" stroke-width="1.6"/><path d="M28 73.5h4" stroke="#a9bde0"/>
<path d="M43 82v8.5h8" fill="none" stroke="#a9bde0"/>
<g transform="translate(22,103)"><use href="#hnd"/></g>
<g transform="translate(22,119)"><use href="#hnd"/></g>
<g transform="translate(20.5,2.5)"><rect x="0.5" y="1.5" width="12.5" height="10" rx="2" fill="url(#gChip)" stroke="#4a4a4a"/><rect x="2.5" y="4.5" width="8.5" height="3" fill="#c4c4c4"/><path d="M3 1.5v-1M5.5 1.5v-1M8 1.5v-1M10.5 1.5v-1M3 11.5v1M5.5 11.5v1M8 11.5v1M10.5 11.5v1" stroke="#555"/></g>
<g transform="translate(37,17)"><use href="#folder"/><rect x="8.5" y="6.5" width="5.5" height="7" fill="#e6ecf2" stroke="#5a6b7c"/><path d="M9.5 9h3.5M9.5 11h3.5" stroke="#7d8fa2"/></g>
<g transform="translate(37,33.5)"><use href="#folder"/><rect x="6" y="7.5" width="7" height="3" fill="#d8d0b0" stroke="#5a5030"/><rect x="8.5" y="10.5" width="2.5" height="4" fill="#d8a800" stroke="#6a5a10" stroke-width="0.6"/></g>
<g transform="translate(37,50)"><use href="#folder"/><rect x="8.5" y="6.5" width="5.5" height="7" fill="#e6ecf2" stroke="#5a6b7c"/><path d="M9.5 9h3.5M9.5 11h3.5" stroke="#7d8fa2"/></g>
<g transform="translate(37,66)"><use href="#folder"/><rect x="8.5" y="6.5" width="5.5" height="7" fill="#e6ecf2" stroke="#5a6b7c"/><path d="M9.5 9h3.5M9.5 11h3.5" stroke="#7d8fa2"/></g>
<g transform="translate(55,82)"><use href="#cfile"/></g>
<g transform="translate(37,99)"><use href="#folder"/><rect x="5.5" y="7.5" width="8" height="3.5" rx="1" fill="#b84040" stroke="#6a2020" stroke-width="0.7"/><rect x="5.5" y="10.5" width="8" height="2.5" fill="#c8b060" stroke="#6a5a20" stroke-width="0.7"/></g>
<g transform="translate(37,115)"><use href="#folder"/><text x="10" y="14" font-family="Liberation Sans" font-weight="bold" font-size="7.5" fill="#f08a10" text-anchor="middle">01</text></g>
</svg>
<!-- LEFT PANEL 2 -->
<div class="a" style="left:11px;top:364px;width:217px;height:252px;border:1px solid #b9cde3;background:#fff"></div>
<div class="a" style="left:12px;top:365px;width:215px;height:19px;background:#ededed;border-bottom:1px solid #999"></div>
<div class="a" style="left:12px;top:365px;width:92.5px;height:15px;border-right:1px solid #aaa;border-bottom:1px solid #aaa;border-left:1px solid #fff;border-top:1px solid #fff;background:#e9e9e9"></div>
<div class="a" style="left:195px;top:366px;width:32px;height:14px;border-left:1px solid #fff;background:#e6e6e6"></div>
<div class="t" style="left:16px;top:367px;font-size:11.9px">study1 - Dash...</div>
<div class="t" style="left:107.5px;top:367px;font-size:12.2px">main(int ar...</div>
<svg class="a" style="left:183px;top:369px" width="9" height="9"><path d="M1 1L8 8M8 1L1 8" stroke="#222" stroke-width="1.3"/></svg>
<div class="a" style="left:209px;top:369px;width:11px;height:9px;border:1px solid #333;border-radius:1px;background:#f4f4f4"><div class="a" style="left:2px;top:4px;width:5px;height:2px;background:#111"></div></div>
<div class="a" style="left:52px;top:384px;width:142px;height:16px;background:#bcd1e8"></div>
<div class="t" style="left:52.5px;top:385px;font-size:12px">main(int argc, char** argv)</div>
<div class="a" style="left:18px;top:391px;width:9px;height:1px;background:#9fb6d6"></div>
<!-- nav icon -->
<svg class="a" style="left:31px;top:385px" width="14" height="14"><g transform="translate(1,1)"><use href="#fbadge"/></g></svg>


<!-- EDITOR -->
<div class="a" style="left:231px;top:88px;width:700px;height:225px;border:1px solid #b9cde3;background:#ededed"></div>
<div class="a" style="left:232px;top:108.5px;width:698px;height:1px;background:#8496ad"></div>
<!-- editor tabs -->
<svg class="a" style="left:0;top:0" width="940" height="140">
<path d="M232.5 108.5V98.8l5.5-5.3h83.5v15" fill="#e9e9e9" stroke="#8496ad"/>
<path d="M322.5 108.5V98.8l5-5.3h114.5v15" fill="#e9e9e9" stroke="#8496ad"/>
<path d="M442.5 109V96.5l3-5h77v17.5" fill="#f8f8f8" stroke="#8496ad"/>
<path d="M312.5 99.5l4 4M316.5 99.5l-4 4M433 99.5l4 4M437 99.5l-4 4M513 99.5l4 4M517 99.5l-4 4" stroke="#111" stroke-width="1.4"/>
<path d="M446.5 97v11" stroke="#8aa0b8" stroke-dasharray="1 1.2"/>
<path d="M329.5 97.5h13l-2 7h-9z" fill="#6cb43c" stroke="#4e8e2a" stroke-width="0.8"/><path d="M342.5 97.5l1.5-2.5h2" fill="none" stroke="#6cb43c" stroke-width="1.6"/><path d="M331 100h10M331.5 102.5h8.5" stroke="#a6d880" stroke-width="0.7"/><circle cx="333" cy="106.3" r="1.2" fill="#666"/><circle cx="339" cy="106.3" r="1.2" fill="#666"/>
<g transform="translate(452,93)"><use href="#cfile"/></g>
<path d="M863.5 91.5h29v14h-29z" fill="#efefef" stroke="#9fb0c4"/><path d="M878 92v13" stroke="#9fb0c4"/><path d="M864.5 104.5h27" stroke="#fff"/>
<path d="M872.5 94.5v8l-4-4z" fill="#7b8ea3"/><path d="M883.5 94.5v8l4-4z" fill="#7b8ea3"/>
<path d="M895.5 91.5h14v14h-14z" fill="url(#gBtn)" stroke="#9fb0c4"/><path d="M898.5 96.5h8l-4 4.5z" fill="#222"/>
<path d="M912.5 91.5h14v14h-14z" fill="url(#gBtn)" stroke="#9fb0c4"/><rect x="915.5" y="94.5" width="8" height="8" rx="1" fill="none" stroke="#333" stroke-width="1.6"/>
</svg>
<div class="t" style="left:244.5px;top:94px">Start Page</div>
<div class="t" style="left:348px;top:94px;letter-spacing:-0.38px">MPLAB X Store</div>
<div class="t" style="left:469.5px;top:94px">main.c</div>
<!-- editor toolbar -->
<div class="a" style="left:232px;top:110px;width:698px;height:27px;background:linear-gradient(#fdfdfd,#f2f2f2 60%,#e2e2e2)"></div>
<div class="a" style="left:232px;top:136px;width:698px;height:2px;background:#333"></div>
<div class="a" style="left:232px;top:114px;width:55px;height:21px;border:1px solid #9fb5cf;background:#b9cfe6"></div>
<div class="t" style="left:242px;top:118px">Source</div>
<div class="a" style="left:289px;top:114px;width:54px;height:21px;border:1px solid #c4c4c4;background:#f2f2f2"></div>
<div class="t" style="left:297.5px;top:118px">History</div>
<!-- editor toolbar icons -->
<svg class="a" style="left:0;top:0" width="940" height="140">
<path d="M908.5 110v26" stroke="#d6d6d6"/><path d="M909.5 110v26" stroke="#fff"/>
<!-- disabled doc -->
<path d="M350.5 120.5h9l4 4v8.5h-13z" fill="#e6e6e6" stroke="#c4c4c4"/><path d="M349 122h6" stroke="#c8c8c8" stroke-width="2"/><path d="M353 131l3-5 3 5" fill="none" stroke="#cfcfcf"/>
<!-- last edit -->
<rect x="380.5" y="119.5" width="12.5" height="12" fill="#e8eef4" stroke="#4e6072"/><path d="M383.5 121.5v8M382.5 121.5h2M382.5 129.5h2" stroke="#333" stroke-width="0.8"/>
<path d="M386 125.5l3.5-3v2h5v3h-5v2z" fill="#f0a848" stroke="#9a5a10" stroke-width="0.8"/>
<!-- back -->
<rect x="403.5" y="119.5" width="12" height="12" fill="#e8eef4" stroke="#4e6072"/><path d="M405.5 122h7M405.5 124h5" stroke="#9aa8b8" stroke-width="0.8"/>
<path d="M406.5 128.5l4-3.5v2h6v3h-6v2z" fill="#f0a848" stroke="#9a5a10" stroke-width="0.8"/>
<path d="M421.7 124.3h5l-2.5 3z" fill="#2d3e50"/>
<!-- forward disabled -->
<rect x="434.5" y="119.5" width="12.5" height="12" fill="#dadada" stroke="#b8b8b8"/><path d="M444 127l-4-3.5v2h-5v3h5v2z" fill="#d8c8b0" stroke="#b8a890" stroke-width="0.8"/>
<path d="M453.7 124.3h5l-2.5 3z" fill="#2d3e50"/>
<!-- find -->
<rect x="474.5" y="119" width="11" height="5.5" rx="0.8" fill="#f0a848" stroke="#a86a20" stroke-width="0.8"/>
<circle cx="481.3" cy="125.5" r="3.8" fill="#d8e8f4" stroke="#333" stroke-width="1.3"/><path d="M484 128.3l4 4" stroke="#111" stroke-width="2"/>
<!-- prev occ -->
<rect x="496.5" y="119" width="10.5" height="5.5" rx="0.8" fill="#f0a848" stroke="#a86a20" stroke-width="0.8"/>
<path d="M499 127.5l4.5-4.5v2.5h7v4h-7v2.5z" fill="#5aa8e8" stroke="#1a5aa0" stroke-width="0.9"/>
<!-- next occ -->
<rect x="522" y="119" width="10.5" height="5.5" rx="0.8" fill="#f0a848" stroke="#a86a20" stroke-width="0.8"/>
<path d="M529.5 127.5l-4.5-4.5v2.5h-7v4h7v2.5z" fill="#5aa8e8" stroke="#1a5aa0" stroke-width="0.9"/>
<!-- toggle highlight -->
<rect x="540" y="119" width="10.5" height="5.5" rx="0.8" fill="#f0a848" stroke="#a86a20" stroke-width="0.8"/>
<path d="M541 125.5l2 2" stroke="#999" stroke-width="0.6"/>
<rect x="542.5" y="126.5" width="11.5" height="6" rx="1" fill="#c8c8c8" stroke="#555" stroke-width="0.9"/>
<!-- rect select -->
<rect x="561.5" y="119.5" width="11.5" height="9" fill="none" stroke="#444" stroke-dasharray="1.2 1" stroke-width="0.9"/>
<path d="M570 125.5v7l1.8-1.8 1.4 2.5 1.2-0.6-1.4-2.4 2.6-0.2z" fill="#3a4e62" stroke="#222" stroke-width="0.5"/>
<!-- prev bookmark -->
<path d="M598.5 119.5h6l2.3 2.3-2.3 2.3h-6z" fill="#8ed0e8" stroke="#2a7aa0" stroke-width="0.8"/>
<path d="M597.5 122.5l5 4.5h-3v5h-4v-5h-3z" fill="#f2b060" stroke="#9a5a10" stroke-width="0.9"/>
<!-- next bookmark -->
<path d="M620 126.5h6.5l2.3 2.3-2.3 2.3h-6.5z" fill="#8ed0e8" stroke="#2a7aa0" stroke-width="0.8"/>
<path d="M619 129l5-4.5h-3v-5h-4v5h-3z" fill="#f2b060" stroke="#9a5a10" stroke-width="0.9"/>
<!-- toggle bookmark -->
<path d="M636.5 119.5h6l2.3 2.3-2.3 2.3h-6z" fill="#8ed0e8" stroke="#2a7aa0" stroke-width="0.8"/>
<path d="M638 124.5l3 2" stroke="#777" stroke-width="0.6"/>
<path d="M641.5 126.5h6.5l2.5 3-2.5 3h-6.5z" fill="#d0d0d0" stroke="#666" stroke-width="0.8"/>
<!-- shift left -->
<path d="M667 123.8l4-3.5v2h5v3h-5v2z" fill="#8ed0e8" stroke="#1a5aa0" stroke-width="0.9"/>
<path d="M678 121.5h4M678 123.5h4M678 125.5h4M678 127.5h4M669 130h13M669 132h13" stroke="#666" stroke-width="1.2" stroke-dasharray="1 0.5"/>
<!-- shift right -->
<path d="M699 123.8l-4-3.5v2h-5.5v3h5.5v2z" fill="#8ed0e8" stroke="#1a5aa0" stroke-width="0.9"/>
<path d="M698 121.5h4M698 123.5h4M698 125.5h4M698 127.5h4M689 130h13M689 132h13" stroke="#666" stroke-width="1.2" stroke-dasharray="1 0.5"/>
<!-- record -->
<circle cx="726.4" cy="125.8" r="5.2" fill="url(#gRed)" stroke="#b84848" stroke-width="0.8"/>
<!-- stop -->
<rect x="743.5" y="120.5" width="10.5" height="10.5" rx="1" fill="#c8c8c8" stroke="#666"/><rect x="744.5" y="121.5" width="8.5" height="3" fill="#e0e0e0"/>
<!-- macro play -->
<path d="M775 126.5l3-7M778.5 126.5l3-7" stroke="#2a9a10" stroke-width="2"/><path d="M775 126.5l3-7M778.5 126.5l3-7" stroke="#9ae070" stroke-width="0.8"/>
<path d="M782 122h4M782 124h4M782 126h4M773 128h13M773 130h13M773 132h13" stroke="#666" stroke-width="1.2" stroke-dasharray="1 0.4"/>
<!-- macro stop -->
<path d="M803 121.5h4M803 123.5h4M803 125.5h4M803 127.5h4M795 129h12M795 131h12M795 133h12" stroke="#444" stroke-width="1.3" stroke-dasharray="1 0.4"/>
<!-- C/H -->
<path d="M816.5 119.5l13 12.5h-13z" fill="#c8d4e0" stroke="#7a8a9a" stroke-width="0.9"/>
<rect x="823" y="118" width="7" height="7" fill="#777"/><text x="826.5" y="124" font-family="Liberation Sans" font-weight="bold" font-size="6.5" fill="#fff" text-anchor="middle">H</text>
<rect x="815.5" y="125.5" width="7.5" height="7" fill="#e07b10"/><text x="819.3" y="131.5" font-family="Liberation Sans" font-weight="bold" font-size="6.5" fill="#fff" text-anchor="middle">C</text>
<!-- expand -->
<rect x="916.5" y="120.5" width="10" height="10" rx="1.5" fill="#f4f4f4" stroke="#777" stroke-width="0.9"/>
<circle cx="919.6" cy="123.6" r="1.7" fill="#222"/><circle cx="923.4" cy="123.6" r="1.7" fill="#222"/><circle cx="919.6" cy="127.4" r="1.7" fill="#222"/><circle cx="923.4" cy="127.4" r="1.7" fill="#222"/>
<path d="M921.5 121.5v8M917.5 125.5h8" stroke="#fff" stroke-width="0.9"/>
</svg>
<!-- code area -->
<div class="a" style="left:232px;top:138px;width:672px;height:141px;background:#fff"></div>
<div class="a" style="left:232px;top:138px;width:26px;height:154px;background:#e9e9e5"></div>
<div class="a" style="left:258px;top:278px;width:26px;height:14px;background:#e9e9e5"></div>
<div class="a" style="left:283px;top:201.3px;width:621px;height:15.3px;background:#bde3ab"></div>
<div class="a" style="left:864px;top:138px;width:1px;height:141px;background:#f4a0a0"></div>
<div class="ln" style="top:140.90px">14</div><svg class="a" style="left:0;top:0" width="940" height="300">
<path d="M256.5 138v140" stroke="#d8d8d4"/>
<rect x="265.5" y="174.5" width="7" height="7.5" fill="#fff" stroke="#555"/><path d="M267 178.3h4" stroke="#333"/>
<path d="M269 182.5V278" stroke="#999" stroke-width="2"/>
<path d="M283.5 186V278" stroke="#c8c8c8" stroke-dasharray="1 2"/>
<rect x="244.5" y="206.5" width="8" height="7" fill="#f3c0c0" stroke="#c03030"/>
<path d="M248.5 209h4v-2.5l4 4-4 4v-2.5h-4z" fill="#7ad050" stroke="#2a8020" stroke-width="0.9"/>
<path d="M378.5 182.5h27M472.5 182.5h28" stroke="#888" stroke-dasharray="1 1" stroke-width="0.9"/>
</svg>

<div class="ln" style="top:156.30px">15</div>
<div class="ln" style="top:171.70px">16</div>
<div class="ln" style="top:187.10px">17</div>
<div class="ln" style="top:217.90px">19</div>
<div class="ln" style="top:233.30px">20</div>
<div class="ln" style="top:248.70px">21</div>
<div class="ln" style="top:264.10px">22</div>
<div class="code" style="top:141.40px"><span class="pp">#include</span> <span class="st">&lt;avr/io.h&gt;</span></div>
<div class="code" style="top:172.20px"><span class="kw">int</span> <span class="b">main</span>(<span class="kw">int</span> argc, <span class="kw">char</span>** argv) {</div>
<div class="code" style="top:187.60px"><span class="cm">    // Clear Timer/Counter1 registers</span></div>
<div class="code" style="top:203.00px">    <span class="mc">TCCR1A</span> = 0;</div>
<div class="code" style="top:218.40px">    <span class="mc">TCCR1B</span> = 0;</div>
<div class="code" style="top:249.20px"><span class="cm">    // Set timer mode and clock source</span></div>
<div class="code" style="top:264.60px;width:621px;overflow:hidden">    <span class="mc">TCCR1A</span> |= (1 &lt;&lt; <span class="mc">COM1A1</span>) | (1 &lt;&lt; <span class="mc">COM1A0</span>) | (1 &lt;&lt; <span class="mc">WGM11</span>); <span class="cm">// Fast PWM mode, non-inverting</span></div>
<!-- v scrollbar -->
<svg class="a" style="left:0;top:0" width="940" height="320">
<rect x="903.5" y="138" width="13" height="139.5" fill="#ececec" stroke="#98acc8"/>
<rect x="904" y="138.5" width="12" height="13" fill="url(#gBtn)" stroke="#c8d4e2" stroke-width="0.6"/><path d="M904 151.5h12" stroke="#98acc8"/>
<path d="M906.5 147h8l-4-4z" fill="#111"/>
<rect x="904" y="264" width="12" height="13" fill="url(#gBtn)"/><path d="M904 263.5h12" stroke="#98acc8"/>
<path d="M906.5 269.5h8l-4 4z" fill="#111"/>
<rect x="903.5" y="184" width="13" height="21.5" fill="url(#gThumbV)" stroke="#5f88c8"/>
<path d="M906.5 192.5h7M906.5 195.5h7M906.5 198.5h7" stroke="#5f88c8"/>
<rect x="920.5" y="145" width="6.5" height="6" fill="#5cb85c"/>
<path d="M919 196h9" stroke="#f080d8" stroke-width="2"/><path d="M922 196h3" stroke="#555" stroke-width="1"/>
<rect x="283.5" y="279" width="619" height="13.5" fill="#ececec" stroke="#98acc8"/>
<rect x="284" y="279.5" width="13" height="12.5" fill="#fff"/><path d="M297.5 279v13.5" stroke="#98acc8"/>
<path d="M293 281.5v8l-4.5-4z" fill="#111"/>
<rect x="887.5" y="279.5" width="14" height="12.5" fill="url(#gBtn)"/><path d="M887.5 279v13.5" stroke="#98acc8"/>
<path d="M892.5 281.5v8l4.5-4z" fill="#111"/>
<rect x="297.5" y="279" width="480" height="13.5" fill="url(#gThumb)" stroke="#5f88c8"/>
<path d="M535.5 282v7.5M537.5 282v7.5M539.5 282v7.5" stroke="#5f88c8" stroke-width="0.8"/>
</svg>
<!-- h scrollbar -->

<!-- breadcrumb -->
<div class="a" style="left:232px;top:312px;width:698px;height:1px;background:#b9cde3"></div><div class="a" style="left:232px;top:294px;width:698px;height:1px;background:#d4e0ec"></div>
<svg class="a" style="left:240px;top:294px" width="110" height="18">
<g transform="translate(1,2)"><use href="#cfile"/></g>
<g transform="translate(24.5,2.5)"><use href="#chev"/></g>
<g transform="translate(46,4)"><use href="#fbadge"/></g>
<g transform="translate(94,2.5)"><use href="#chev"/></g>
</svg>
<div class="t" style="left:303px;top:296px;font-size:12px">main</div>
<svg class="a" style="left:916px;top:299px" width="10" height="10"><path d="M1 1L9 9M9 1L1 9" stroke="#222" stroke-width="1.4"/></svg>

<!-- OUTPUT -->
<div class="a" style="left:231px;top:317px;width:700px;height:299px;border:1px solid #b9cde3;background:#ededed"></div>
<svg class="a" style="left:0;top:0" width="940" height="646">
<path d="M232.5 333V318.5h71v14.5" fill="#ebebeb" stroke="#fff"/><path d="M303.5 318.5V333M232 332.5h72" stroke="#a0a0a0"/>
<rect x="304" y="318" width="97" height="16" fill="#bcd1e8"/>
<path d="M401.5 318.5V333M401 332.5h74" stroke="#a0a0a0"/><path d="M402.5 319V332" stroke="#fff"/>
<path d="M475.5 318.5V333M475 332.5h76" stroke="#a0a0a0"/><path d="M476.5 319V332" stroke="#fff"/>
<path d="M551.5 318.5V333M551 332.5h87" stroke="#a0a0a0"/><path d="M552.5 319V332" stroke="#fff"/>
<path d="M638.5 318.5V333M638 332.5h59" stroke="#a0a0a0"/><path d="M639.5 319V332" stroke="#fff"/>
<path d="M697.5 318.5V333M697 332.5h233" stroke="#a0a0a0"/><path d="M698.5 319V332" stroke="#fff"/>
<rect x="232" y="334" width="698" height="2.5" fill="#aac5e4"/>
<path d="M388.5 322.5l7 7M395.5 322.5l-7 7" stroke="#222" stroke-width="1.3"/>
<g transform="translate(911.5,321.5)"><use href="#mini"/></g>
<!-- chart container -->
<path d="M243.5 603.5V365.5h2V354.5l5.5-5.5h47.5v16.5h620.5v238z" fill="#ededed" stroke="#86a5d6"/>
<path d="M246 366V355l5-5h46.5v16" fill="#c6d9ef"/>
<path d="M244.5 366.5h673" stroke="#fff"/>
<rect x="245" y="369" width="671" height="191.5" fill="#fff" stroke="#3a3f46" stroke-width="2"/>
<rect x="279.5" y="372" width="630" height="133.5" fill="#c0c0c0"/>
<path d="M279.5 372V505.5H909.5V372" fill="none" stroke="#8a8a8a"/>
<g stroke="#fff" stroke-dasharray="2 2" stroke-width="1"><path d="M327.9 372.5V505" /><path d="M376.4 372.5V505" /><path d="M424.9 372.5V505" /><path d="M473.3 372.5V505" /><path d="M521.8 372.5V505" /><path d="M570.2 372.5V505" /><path d="M618.7 372.5V505" /><path d="M667.1 372.5V505" /><path d="M715.5 372.5V505" /><path d="M764.0 372.5V505" /><path d="M812.5 372.5V505" /><path d="M860.9 372.5V505" /></g>
<path d="M861 439h48.5" stroke="#fff" stroke-dasharray="2 2"/>
<path d="M280 439H861" stroke="#ef4545" stroke-width="2.2"/>
<path d="M276 439h3" stroke="#888"/><path d="M279.5 506v3M327.9 506v3M376.4 506v3M424.9 506v3M473.3 506v3M521.8 506v3M570.2 506v3M618.7 506v3M667.1 506v3M715.5 506v3M764.0 506v3M812.5 506v3M860.9 506v3M909.4 506v3" stroke="#888"/>
<path d="M560 549.5h15" stroke="#ef4545" stroke-width="2"/>
<!-- chart toolbar -->
<rect x="254.5" y="570.5" width="22" height="21.5" fill="url(#gBtn)" stroke="#8aa0bc"/>
<rect x="276.5" y="570.5" width="22.5" height="21.5" fill="url(#gBtn2)" stroke="#8aa0bc"/>
<rect x="299.5" y="570.5" width="22.5" height="21.5" fill="url(#gBtn2)" stroke="#8aa0bc"/>
<rect x="322" y="570" width="585" height="22" fill="#ececec" stroke="#9aa8b8"/>
<rect x="322.5" y="570.5" width="14" height="21" fill="#fff"/><path d="M336.5 570v22" stroke="#9aa8b8"/>
<path d="M332.5 576.5v10l-5-5z" fill="#111"/>
<rect x="892" y="570.5" width="14.5" height="21" fill="url(#gBtn)"/><path d="M892 570v22" stroke="#9aa8b8"/>
<path d="M896.5 576.5v10l5-5z" fill="#111"/>
<rect x="376.5" y="570" width="476.5" height="21.5" fill="url(#gThumb)" stroke="#5f88c8"/>
<path d="M612.5 574v14M614.5 574v14M616.5 574v14" stroke="#5f88c8" stroke-width="0.8"/>
<!-- tools icon -->
<path d="M271 576.5L260.5 587" stroke="#8c8c8c" stroke-width="2.4" stroke-linecap="round"/>
<path d="M269.5 574.2a2.8 2.8 0 1 0 3.6 3.6l-1.6-0.2-1.8-1.8z" fill="#a8a8a8" stroke="#707070" stroke-width="0.6"/>
<path d="M263.5 578.5l2.6 2.6" stroke="#333" stroke-width="2.4"/>
<path d="M266.5 580.5l6 6" stroke="#d42525" stroke-width="3.2" stroke-linecap="round"/>
<path d="M259 578.2l4.6-4.2 3.6 2.6-4.3 4.3z" fill="#151515"/>
<!-- refresh -->
<path d="M284.5 583.5a5.2 5.2 0 0 1 6.5-8" fill="none" stroke="#3c9a22" stroke-width="3.2"/>
<path d="M293.5 576.5a5.2 5.2 0 0 1-6.5 8" fill="none" stroke="#3c9a22" stroke-width="3.2"/>
<path d="M284.5 583.5a5.2 5.2 0 0 1 6.5-8" fill="none" stroke="#b6e890" stroke-width="1.2"/>
<path d="M293.5 576.5a5.2 5.2 0 0 1-6.5 8" fill="none" stroke="#b6e890" stroke-width="1.2"/>
<path d="M290 572.5l4 3.2-4 2.6z" fill="#4aa82a"/><path d="M288 587.5l-4-3.2 4-2.6z" fill="#4aa82a"/>
<!-- trash -->
<path d="M304.8 577.8v-2a2 2 0 0 1 2-2h9a2 2 0 0 1 2 2v2z" fill="#6a9ed4" stroke="#3a6a9a" stroke-width="0.8"/>
<rect x="306.5" y="578" width="10" height="9" fill="#c8ccd0" stroke="#6a7078" stroke-width="0.9"/><path d="M309.5 580v5M313.5 580v5" stroke="#888" stroke-width="1.2"/>
<!-- red annotations -->
<path d="M333 309.5C350 307.5 375 307 392 313C402 318 402 332 394 337.5C388 341 382 343 378 345M381 340.5C365 340 350 341 340 342.5C320 344 302 342 297 333C293 325 297 316 307 312C315 310 325 309.5 333 309.5" fill="none" stroke="#e8141a" stroke-width="3.3" stroke-linecap="round"/>
<path d="M268 598.5C255 599 243 592 239 582C236 572 244 565 258 564C272 563 280 570 281 580C282 590 277 596 272 598.5" fill="none" stroke="#e8141a" stroke-width="3.3" stroke-linecap="round"/>
</svg>
<div class="t" style="left:236px;top:320px">Stimulus</div>
<div class="t" style="left:307px;top:320px">Logic Analyzer</div>
<div class="t" style="left:404.5px;top:320px">Variables</div>
<div class="t" style="left:479px;top:320px">Call Stack</div>
<div class="t" style="left:554.5px;top:320px">Breakpoints</div>
<div class="t" style="left:642px;top:320px">Output</div>
<div class="t" style="left:253.5px;top:350px">study1</div>
<div class="tk" style="left:269.5px">0</div><div class="tk" style="left:317.9px">1</div><div class="tk" style="left:366.4px">2</div><div class="tk" style="left:414.9px">3</div><div class="tk" style="left:463.3px">4</div><div class="tk" style="left:511.8px">5</div><div class="tk" style="left:560.2px">6</div><div class="tk" style="left:608.7px">7</div><div class="tk" style="left:657.1px">8</div><div class="tk" style="left:705.5px">9</div><div class="tk" style="left:754.0px">10</div><div class="tk" style="left:802.5px">11</div><div class="tk" style="left:850.9px">12</div><div class="tk" style="left:899.4px">13</div>
<div class="t" style="left:549px;top:520px;font-size:11.8px">Instruction Cycles</div>
<div class="t" style="left:268px;top:432px;font-size:10.5px">0</div>
<div class="t" style="left:242px;top:431.5px;font-size:12.8px;line-height:15px;transform:rotate(-90deg);transform-origin:center;width:32px;text-align:center">Volts</div>
<div class="t" style="left:578px;top:542px;font-size:11px">PB1</div>
<!-- STATUS -->
<svg class="a" style="left:0;top:0" width="940" height="646">
<rect x="746.5" y="623.5" width="10" height="9.5" rx="1.5" fill="#dfe8f2" stroke="#8a9ab0"/><path d="M749 626l5 4.5M754 626l-5 4.5" stroke="#111" stroke-width="1.5"/>
<path d="M779 621.5h6a4.5 4.5 0 0 1 4.5 4.5v1.5a4.5 4.5 0 0 1-4.5 4.5h-0.5l1.5 3.5-4.5-3.5h-2.5a4.5 4.5 0 0 1-4.5-4.5v-1.5a4.5 4.5 0 0 1 4.5-4.5z" fill="#e4ecf4" stroke="#6a7a8a" stroke-width="1.1"/>
<text x="782" y="630.5" font-family="Liberation Sans" font-weight="bold" font-size="9.5" fill="#111" text-anchor="middle">2</text>
</svg>
<div class="a" style="left:232px;top:616px;width:700px;height:1px;background:#dcdcdc"></div>
<div class="t" style="left:434.5px;top:621px;font-size:11.8px">study1 (Build, Load, ...)</div>
<div class="a" style="left:560px;top:620px;width:181px;height:16.5px;border:1px solid #98a8bc"></div>
<div class="t" style="left:608.5px;top:621px;color:#6a8ec6">debugger halted</div>
<div class="t" style="left:840px;top:621px">18:1</div>
<div class="t" style="left:911.5px;top:621px">INS</div>
<div class="a" style="left:792px;top:622px;width:1px;height:13px;background:#6a8ec6"></div>
<div class="a" style="left:907px;top:622px;width:1px;height:13px;background:#6a8ec6"></div>
</body></html>
